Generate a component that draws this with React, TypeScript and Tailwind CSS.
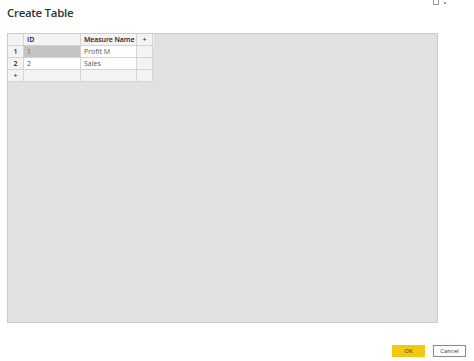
import React from 'react';

const cellBase = 'border-r border-b border-[#d4d4d4] h-[12px] text-[7px] leading-[11px] px-[3px] whitespace-nowrap overflow-hidden';

const App: React.FC = () => {
  const rows = [
    { n: '1', id: '1', name: 'Profit M', selected: true },
    { n: '2', id: '2', name: 'Sales', selected: false },
  ];

  return (
    <div className="w-[474px] h-[361px] bg-white relative font-['Segoe_UI','Open_Sans','Liberation_Sans',sans-serif] text-[#252423]">
      {/* window controls */}
      <div className="absolute top-0 right-[28px] flex items-start gap-[5px]">
        <div className="w-[6px] h-[5px] border border-t-0 border-[#9a9a9a]" />
        <div className="w-[2px] h-[2px] bg-[#9a9a9a] mt-[2px]" />
      </div>

      <div className="flex flex-col h-full pl-[7px] pr-[36px]">
        <h1 className="text-[11.5px] font-semibold tracking-[-0.3px] leading-none pt-[7px] h-[33px] text-[#333]">Create Table</h1>

        <div className="h-[290px] bg-[#e1e1e1] border border-[#cccccc]">
          <div className="flex flex-col w-[146px]">
            {/* header */}
            <div className="flex bg-[#f3f3f3]">
              <div className={`${cellBase} w-[16px]`} />
              <div className={`${cellBase} w-[57px] font-semibold`}>ID</div>
              <div className={`${cellBase} w-[56px] font-semibold text-[6.5px] tracking-[-0.1px]`}>Measure Name</div>
              <div className={`${cellBase} w-[16px] text-center`}>+</div>
            </div>
            {rows.map((r) => (
              <div key={r.n} className="flex">
                <div className={`${cellBase} w-[16px] bg-[#f3f3f3] font-semibold text-center px-0`}>{r.n}</div>
                <div className={`${cellBase} w-[57px] ${r.selected ? 'bg-[#c3c3c3] text-[#6a6a6a]' : 'bg-white text-[#555]'}`}>{r.id}</div>
                <div className={`${cellBase} w-[56px] bg-white text-[#555]`}>{r.name}</div>
                <div className={`${cellBase} w-[16px] bg-[#f3f3f3]`} />
              </div>
            ))}
            <div className="flex">
              <div className={`${cellBase} w-[16px] bg-[#f3f3f3] text-center px-0`}>+</div>
              <div className={`${cellBase} w-[57px] bg-[#f3f3f3]`} />
              <div className={`${cellBase} w-[56px] bg-[#f3f3f3]`} />
              <div className={`${cellBase} w-[16px] bg-[#f3f3f3]`} />
            </div>
          </div>
        </div>

        <div className="flex justify-end gap-[8px] mt-[22px] -mr-[28px]">
          <button className="w-[33px] h-[12px] bg-[#f2c811] text-[6px] leading-none text-[#333]">OK</button>
          <button className="w-[33px] h-[12px] bg-white border border-[#8a8a8a] text-[6px] leading-none text-[#333]">Cancel</button>
        </div>
      </div>
    </div>
  );
};

export default App;
